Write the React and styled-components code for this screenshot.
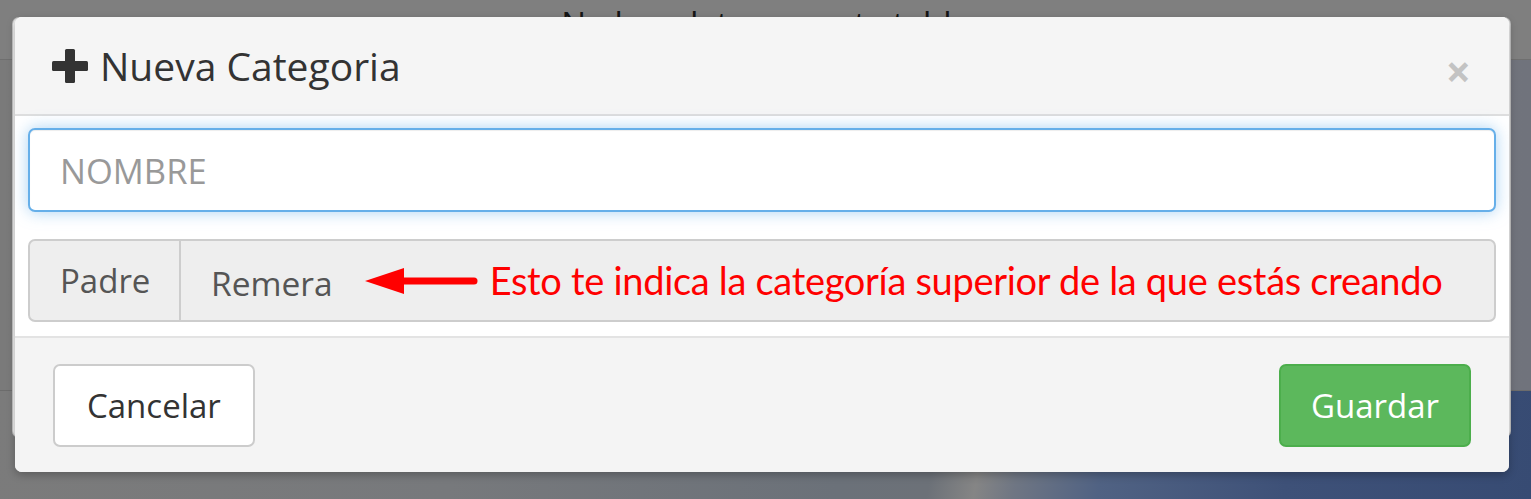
import React from "react";
import styled, { createGlobalStyle } from "styled-components";

const Global = createGlobalStyle`
  html, body { margin: 0; padding: 0; }
  body {
    width: 1531px;
    height: 499px;
    overflow: hidden;
    font-family: "Open Sans", "Noto Sans", sans-serif;
  }
  * { box-sizing: border-box; }
`;

const Page = styled.div`
  position: relative;
  width: 1531px;
  height: 499px;
  overflow: hidden;
`;

const Backdrop = styled.div`
  display: flex;
  flex-direction: column;
  height: 100%;
`;

const TopBand = styled.div`
  height: 60px;
  background: #7f7f7f;
  border-bottom: 1px solid #6f6f6f;
  display: flex;
  justify-content: center;
  padding: 7px 0 0 0;
`;

const EmptyText = styled.div`
  font-family: "Open Sans", sans-serif;
  font-size: 33px;
  line-height: 33px;
  color: #151515;
  margin-left: 0px;
`;

const MiddleBand = styled.div`
  height: 331px;
  background: linear-gradient(90deg, #7a7a7a 0%, #787879 60%, #70737c 100%);
  border-bottom: 1px solid #6c6c6c;
`;

const BottomBand = styled.div`
  flex: 1;
  background: linear-gradient(
    100deg,
    #7b7b7b 0%,
    #77797c 30%,
    #6b7179 55%,
    #6c7178 61%,
    #858585 64%,
    #6f7683 66.5%,
    #506283 72%,
    #3e5178 84%,
    #374b73 100%
  );
`;

const GhostModal = styled.div`
  position: absolute;
  top: 17px;
  left: 12px;
  width: 1499px;
  height: 421px;
  background: #ececec;
  border: 1px solid rgba(0, 0, 0, 0.18);
  border-radius: 7px;
`;

const Modal = styled.div`
  position: absolute;
  top: 17px;
  left: 15px;
  width: 1494px;
  height: 455px;
  display: flex;
  flex-direction: column;
  background: #fff;
  border-radius: 7px;
  overflow: hidden;
  box-shadow: 0 3px 9px rgba(0, 0, 0, 0.25);
`;

const Header = styled.div`
  height: 99px;
  flex: none;
  background: #f5f5f5;
  border-bottom: 2px solid #dedede;
  display: flex;
  align-items: center;
  justify-content: space-between;
  padding: 0 38px 0 37px;
`;

const Title = styled.h4`
  margin: 0;
  display: flex;
  align-items: center;
  gap: 12px;
  font-family: "Open Sans", sans-serif;
  font-weight: 400;
  font-size: 39px;
  color: #333;
  line-height: 1;
`;

const Close = styled.span`
  font-family: "Open Sans", sans-serif;
  font-weight: 700;
  font-size: 44px;
  line-height: 1;
  color: #c3c3c3;
  margin-top: 10px;
`;

const Body = styled.div`
  height: 220px;
  flex: none;
  background: #fff;
  padding: 12px 13px 0 13px;
  display: flex;
  flex-direction: column;
  gap: 27px;
`;

const NameInput = styled.input`
  height: 84px;
  width: 100%;
  border: 2px solid #66afe9;
  border-radius: 7px;
  outline: none;
  background: #fff;
  padding: 0 30px;
  font-family: "Open Sans", sans-serif;
  font-size: 34.5px;
  color: #555;
  box-shadow: inset 0 1px 1px rgba(0, 0, 0, 0.075), 0 0 16px rgba(102, 175, 233, 0.55);
  &::placeholder { color: #999; }
`;

const InputGroup = styled.div`
  height: 83px;
  display: flex;
  border: 2px solid #cdcdcd;
  border-radius: 7px;
  background: #eee;
  overflow: hidden;
`;

const Addon = styled.div`
  width: 151px;
  flex: none;
  display: flex;
  align-items: center;
  padding-left: 30px;
  border-right: 2px solid #cdcdcd;
  font-family: "Open Sans", sans-serif;
  font-size: 33px;
  color: #555;
`;

const ParentField = styled.div`
  flex: 1;
  display: flex;
  align-items: center;
  padding-left: 30px;
`;

const ParentValue = styled.span`
  font-family: "Open Sans", sans-serif;
  font-size: 33.5px;
  color: #555;
  margin-top: 4px;
`;

const ArrowSvg = styled.svg`
  flex: none;
  margin-left: 32px;
  margin-right: 12px;
`;

const Hint = styled.span`
  font-family: "Lato", sans-serif;
  font-size: 38px;
  color: #ff0000;
  letter-spacing: -0.3px;
  margin-top: -2px;
`;

const Footer = styled.div`
  flex: 1;
  background: #f4f4f4;
  border-top: 2px solid #e3e3e3;
  display: flex;
  justify-content: space-between;
  align-items: flex-start;
  padding: 26px 38px 0 38px;
`;

const Button = styled.button`
  height: 83px;
  padding: 0 ${(p) => (p.$variant === "success" ? "30px" : "32px")};
  border-radius: 7px;
  border: 2px solid ${(p) => (p.$variant === "success" ? "#4cae4c" : "#cccccc")};
  background: ${(p) => (p.$variant === "success" ? "#5cb85c" : "#ffffff")};
  color: ${(p) => (p.$variant === "success" ? "#ffffff" : "#333333")};
  font-family: "Open Sans", sans-serif;
  font-size: 33px;
  line-height: 1;
  cursor: pointer;
`;

const PlusIcon = () => (
  <svg width="36" height="34" viewBox="0 0 36 34" aria-hidden="true">
    <rect x="13" y="0" width="10" height="34" rx="1.5" fill="#333" />
    <rect x="0" y="12" width="36" height="10" rx="1.5" fill="#333" />
  </svg>
);

const Arrow = () => (
  <ArrowSvg width="113" height="30" viewBox="0 0 113 30" aria-hidden="true">
    <polygon points="0,15 39,2 39,28" fill="#ff0000" />
    <line x1="36" y1="15" x2="109" y2="15" stroke="#ff0000" strokeWidth="7" strokeLinecap="round" />
  </ArrowSvg>
);

export default function App() {
  return (
    <>
      <Global />
      <Page>
        <Backdrop>
          <TopBand>
            <EmptyText>No hay datos en esta tabla</EmptyText>
          </TopBand>
          <MiddleBand />
          <BottomBand />
        </Backdrop>
        <GhostModal />
        <Modal>
          <Header>
            <Title>
              <PlusIcon />
              Nueva Categoria
            </Title>
            <Close>×</Close>
          </Header>
          <Body>
            <NameInput placeholder="NOMBRE" />
            <InputGroup>
              <Addon>Padre</Addon>
              <ParentField>
                <ParentValue>Remera</ParentValue>
                <Arrow />
                <Hint>Esto te indica la categoría superior de la que estás creando</Hint>
              </ParentField>
            </InputGroup>
          </Body>
          <Footer>
            <Button $variant="default">Cancelar</Button>
            <Button $variant="success">Guardar</Button>
          </Footer>
        </Modal>
      </Page>
    </>
  );
}
